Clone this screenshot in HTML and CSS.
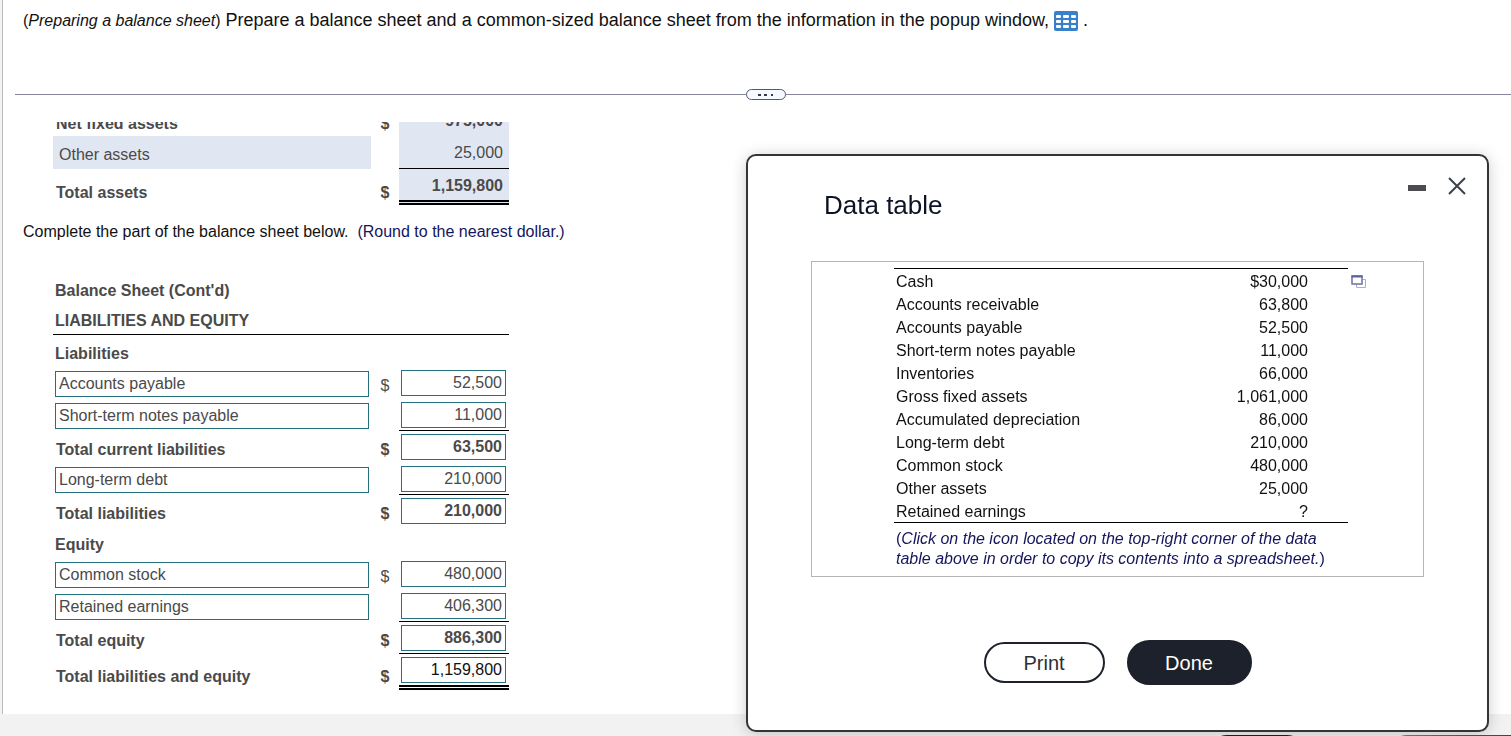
FILE: index.html
```html
<!DOCTYPE html>
<html lang="en">
<head>
    <meta charset="UTF-8">
    <meta name="viewport" content="width=device-width, initial-scale=1.0">
    <title>Preparing a balance sheet</title>
    <link rel="stylesheet" href="styles.css">
</head>
<body>
    <main class="exercise">
        <p class="question">
            <span class="topic">(<i>Preparing a balance sheet</i>)</span>
            Prepare a balance sheet and a common-sized balance sheet from the information in the popup window,
            <button class="icon-button table-link" aria-label="Open data table">
                <svg width="24" height="20" viewBox="0 0 24 20">
                    <rect width="24" height="20" rx="2" fill="#3880cc"/>
                    <g fill="#fff">
                        <rect x="2" y="4" width="5" height="3" rx="1"/><rect x="9" y="4" width="6" height="3" rx="1"/><rect x="17" y="4" width="5" height="3" rx="1"/>
                        <rect x="2" y="9" width="5" height="3" rx="1"/><rect x="9" y="9" width="6" height="3" rx="1"/><rect x="17" y="9" width="5" height="3" rx="1"/>
                        <rect x="2" y="14" width="5" height="3" rx="1"/><rect x="9" y="14" width="6" height="3" rx="1"/><rect x="17" y="14" width="5" height="3" rx="1"/>
                    </g>
                </svg>
            </button>
            .
        </p>

        <div class="splitter">
            <button class="splitter-handle" aria-label="Resize panes">
                <svg width="16" height="2" viewBox="0 0 16 2" fill="#333b4d"><rect width="3" height="2"/><rect x="6" width="3" height="2"/><rect x="13" width="2" height="2"/></svg>
            </button>
        </div>

        <div class="scrolled">
            <table class="sheet completed">
                <colgroup><col><col class="dollar-col"><col class="amount-col"></colgroup>
                <tr class="total"><th>Net fixed assets</th><td class="dollar">$</td><td class="amount">975,000</td></tr>
                <tr><td class="filled">Other assets</td><td class="dollar"></td><td class="amount line">25,000</td></tr>
                <tr class="total"><th>Total assets</th><td class="dollar">$</td><td class="amount double">1,159,800</td></tr>
            </table>
        </div>

        <p class="instruction">Complete the part of the balance sheet below. &nbsp;<span class="hint">(Round to the nearest dollar.)</span></p>

        <table class="sheet">
            <colgroup><col><col class="dollar-col"><col class="amount-col"></colgroup>
            <tr class="heading"><th colspan="3">Balance Sheet (Cont'd)</th></tr>
            <tr class="heading"><th colspan="3" class="line">LIABILITIES AND EQUITY</th></tr>
            <tr class="heading section"><th colspan="3">Liabilities</th></tr>
            <tr>
                <td><input type="text" value="Accounts payable" aria-label="Liability 1"></td>
                <td class="dollar">$</td>
                <td class="amount"><input type="text" value="52,500" aria-label="Accounts payable amount"></td>
            </tr>
            <tr>
                <td><input type="text" value="Short-term notes payable" aria-label="Liability 2"></td>
                <td class="dollar"></td>
                <td class="amount line"><input type="text" value="11,000" aria-label="Short-term notes payable amount"></td>
            </tr>
            <tr class="total">
                <th><label for="currentLiabilities">Total current liabilities</label></th>
                <td class="dollar">$</td>
                <td class="amount"><input type="text" id="currentLiabilities" value="63,500"></td>
            </tr>
            <tr>
                <td><input type="text" value="Long-term debt" aria-label="Long-term liability"></td>
                <td class="dollar"></td>
                <td class="amount line"><input type="text" value="210,000" aria-label="Long-term debt amount"></td>
            </tr>
            <tr class="total">
                <th><label for="totalLiabilities">Total liabilities</label></th>
                <td class="dollar">$</td>
                <td class="amount"><input type="text" id="totalLiabilities" value="210,000"></td>
            </tr>
            <tr class="heading"><th colspan="3">Equity</th></tr>
            <tr>
                <td><input type="text" value="Common stock" aria-label="Equity 1"></td>
                <td class="dollar">$</td>
                <td class="amount"><input type="text" value="480,000" aria-label="Common stock amount"></td>
            </tr>
            <tr>
                <td><input type="text" value="Retained earnings" aria-label="Equity 2"></td>
                <td class="dollar"></td>
                <td class="amount line"><input type="text" value="406,300" aria-label="Retained earnings amount"></td>
            </tr>
            <tr class="total">
                <th><label for="totalEquity">Total equity</label></th>
                <td class="dollar">$</td>
                <td class="amount line"><input type="text" id="totalEquity" value="886,300"></td>
            </tr>
            <tr class="total">
                <th><label for="grandTotal">Total liabilities and equity</label></th>
                <td class="dollar">$</td>
                <td class="amount double"><input type="text" id="grandTotal" class="current" value="1,159,800"></td>
            </tr>
        </table>
    </main>

    <footer class="actions">
        <div class="action dark"></div>
        <div class="action bright"></div>
    </footer>

    <section class="popup" role="dialog" aria-labelledby="popupTitle">
        <header class="popup-header">
            <h1 id="popupTitle">Data table</h1>
            <div class="window-buttons">
                <button class="icon-button" aria-label="Minimize">
                    <svg width="18" height="20" viewBox="0 0 18 20"><rect x="0" y="9" width="18" height="6" fill="#4a4c50"/></svg>
                </button>
                <button class="icon-button" aria-label="Close">
                    <svg width="18" height="20" viewBox="0 0 18 20"><path d="M1 2l16 16M17 2L1 18" stroke="#3c4248" stroke-width="2"/></svg>
                </button>
            </div>
        </header>
        <div class="data-box">
            <div class="data-content">
                <table class="data">
                    <tr><td>Cash</td><td>$30,000</td></tr>
                    <tr><td>Accounts receivable</td><td>63,800</td></tr>
                    <tr><td>Accounts payable</td><td>52,500</td></tr>
                    <tr><td>Short-term notes payable</td><td>11,000</td></tr>
                    <tr><td>Inventories</td><td>66,000</td></tr>
                    <tr><td>Gross fixed assets</td><td>1,061,000</td></tr>
                    <tr><td>Accumulated depreciation</td><td>86,000</td></tr>
                    <tr><td>Long-term debt</td><td>210,000</td></tr>
                    <tr><td>Common stock</td><td>480,000</td></tr>
                    <tr><td>Other assets</td><td>25,000</td></tr>
                    <tr><td>Retained earnings</td><td>?</td></tr>
                </table>
                <p class="note">(<i>Click on the icon located on the top-right corner of the data<br>table above in order to copy its contents into a spreadsheet.</i>)</p>
            </div>
            <button class="icon-button copy" aria-label="Copy to spreadsheet">
                <svg width="16" height="14" viewBox="0 0 16 14" fill="none">
                    <path d="M11 4.500h3.500v8h-9V9" stroke="#a9aed6"/>
                    <rect x="1" y="1" width="10" height="8" fill="#fff" stroke="#6c72a8" stroke-width="1.500"/>
                    <path d="M.5 1.500h11" stroke="#5c6299" stroke-width="2"/>
                </svg>
            </button>
        </div>
        <div class="popup-buttons">
            <button class="pill print">Print</button>
            <button class="pill done">Done</button>
        </div>
    </section>
</body>
</html>
```
FILE: styles.css
```css
* {
    box-sizing: border-box;
}

body {
    margin: 0;
    min-height: 100vh;
    display: flex;
    flex-direction: column;
    background-color: #f2f2f2;
    color: #111;
    font-family: "Liberation Sans", Arial, sans-serif;
    font-size: 16px;
    line-height: 20px;
    overflow: hidden;
}

p, h1 {
    margin: 0;
    font-weight: normal;
}

button, input {
    font: inherit;
    color: inherit;
}

button {
    cursor: pointer;
}

.icon-button {
    display: inline-flex;
    padding: 0;
    border: 0;
    background: none;
}

.exercise {
    flex: 1;
    margin-left: 2px;
    padding: 10px 0 24px 20px;
    border-left: 1px solid #bbb;
    background-color: #fff;
    overflow: hidden;
}

.question {
    font-size: 18px;
}

.topic {
    font-size: 16px;
}

.table-link {
    vertical-align: middle;
}

/* divider between the question and the answer */
.splitter {
    display: flex;
    align-items: center;
    margin: 58px -6px 22px -8px;
}

.splitter::before,
.splitter::after {
    content: "";
    flex: 1;
    border-top: 1px solid #85859c;
}

.splitter-handle {
    display: flex;
    align-items: center;
    justify-content: center;
    width: 40px;
    height: 11px;
    padding: 0;
    border: 1px solid #55596b;
    border-radius: 6px;
    background-color: #f6f9ff;
}

/* shows the end of the finished part, the rest is scrolled out */
.scrolled {
    display: flex;
    align-items: flex-end;
    height: 83px;
    overflow: hidden;
}

.sheet {
    width: 456px;
    margin-left: 30px;
    border-collapse: separate;
    border-spacing: 0;
    table-layout: fixed;
    color: #4a4a4a;
}

.dollar-col {
    width: 28px;
}

.amount-col {
    width: 110px;
}

.sheet td,
.sheet th {
    height: 32px;
    padding: 3px 2px 2px;
    text-align: left;
    vertical-align: bottom;
}

.sheet th {
    padding: 3px;
}

.sheet .dollar {
    padding: 3px 0;
    text-align: center;
}

.sheet .amount {
    padding: 3px 3px 2px 2px;
    text-align: right;
    vertical-align: top;
}

.sheet .line {
    border-bottom: 1px solid #000;
}

.sheet .double {
    height: 36px;
    border-bottom: 5px double #000;
}

.sheet .heading th {
    height: 31px;
    padding: 3px 2px;
}

.sheet .section th {
    height: 32px;
}

.total .dollar,
.total .amount {
    font-weight: bold;
}

.sheet input {
    display: block;
    width: 100%;
    height: 26px;
    padding: 0 3px;
    border: 1px solid #24707f;
    background-color: #fff;
    font-weight: inherit;
}

.amount input {
    text-align: right;
}

.sheet .current {
    color: #111;
    font-weight: normal;
}

.completed th,
.completed .dollar {
    padding-bottom: 2px;
}

.completed .filled,
.completed .amount {
    background-color: #e1e7f2;
}

.completed .filled {
    padding: 6px 6px 4px;
}

.completed .amount {
    padding: 7px 6px 4px;
}

.completed .line {
    height: 33px;
}

.instruction {
    margin: 17px 0 31px;
}

.hint,
.note {
    color: #15155c;
}

.actions {
    display: flex;
    justify-content: flex-end;
    gap: 80px;
    height: 22px;
    padding-top: 21px;
    overflow: hidden;
}

.action {
    width: 100px;
    height: 40px;
    border-radius: 20px 20px 0 0;
}

.dark {
    background-color: #1d212b;
}

.bright {
    width: 124px;
    border-radius: 20px 0 0 0;
    background: linear-gradient(90deg, #e05a6a, #7a1f5e);
}

.popup {
    position: fixed;
    top: 154px;
    right: 22px;
    width: 743px;
    padding: 30px 63px 45px;
    border: 2px solid #333436;
    border-radius: 10px;
    background-color: #fff;
    box-shadow: 0 2px 16px rgba(0, 0, 0, 0.2);
}

.popup-header {
    display: flex;
    justify-content: space-between;
    margin-right: -42px;
    padding-left: 13px;
}

.popup h1 {
    padding-top: 4px;
    color: #0c1326;
    font-size: 26px;
    line-height: 30px;
}

.window-buttons {
    display: flex;
    align-items: flex-start;
    gap: 22px;
    margin-top: -10px;
}

.data-box {
    display: flex;
    align-items: flex-start;
    margin-top: 41px;
    padding: 6px 0 7px 82px;
    border: 1px solid #b5b5b5;
}

.data-content {
    width: 454px;
}

.data {
    width: 100%;
    border-top: 1px solid #000;
    border-bottom: 1px solid #000;
    border-collapse: separate;
    border-spacing: 0;
}

.data td {
    padding: 2px 2px 0;
    line-height: 21px;
}

.data td:last-child {
    padding-right: 40px;
    text-align: right;
}

.note {
    padding: 6px 2px 0;
    white-space: nowrap;
}

.copy {
    margin: 7px 0 0 3px;
}

.popup-buttons {
    display: flex;
    align-items: center;
    justify-content: center;
    gap: 22px;
    margin-top: 63px;
}

.pill {
    border: 2px solid #1d212b;
    border-radius: 23px;
    font-size: 20px;
}

.print {
    width: 121px;
    height: 41px;
    background-color: #fff;
    color: #2c2f38;
}

.done {
    width: 125px;
    height: 45px;
    background-color: #1d212b;
    color: #fff;
}
```
